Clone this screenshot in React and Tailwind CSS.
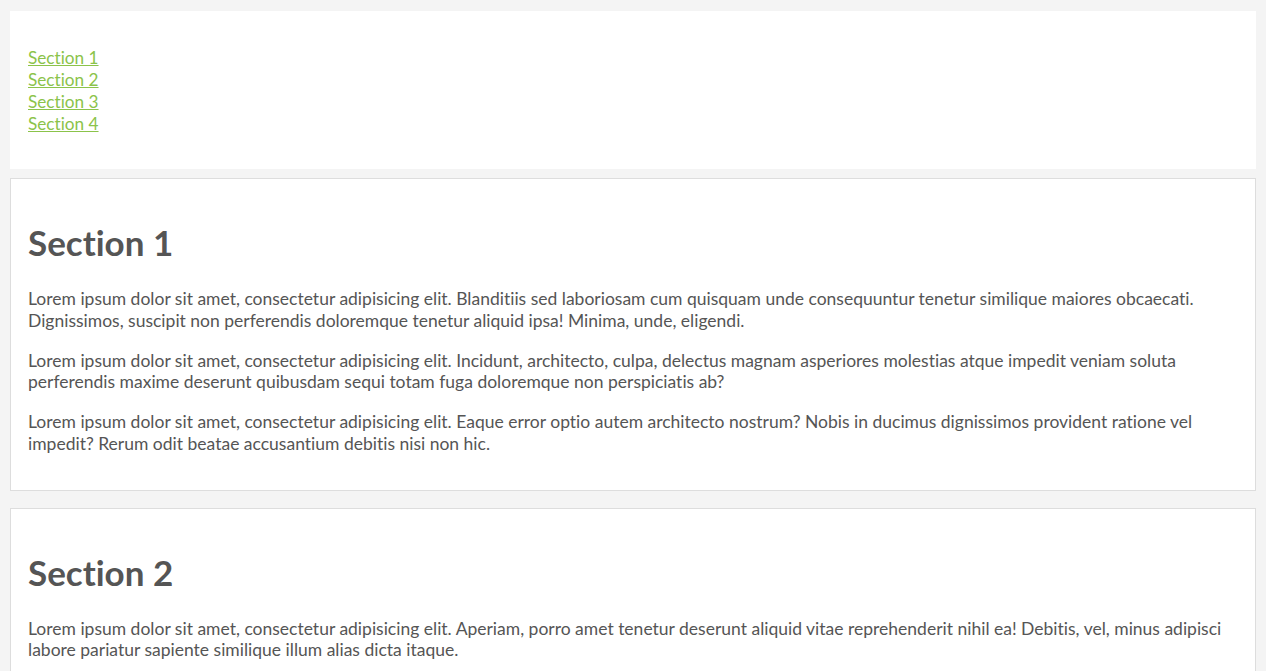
import React from 'react';

const sections = [
  {
    id: 'section-1',
    title: 'Section 1',
    paragraphs: [
      'Lorem ipsum dolor sit amet, consectetur adipisicing elit. Blanditiis sed laboriosam cum quisquam unde consequuntur tenetur similique maiores obcaecati. Dignissimos, suscipit non perferendis doloremque tenetur aliquid ipsa! Minima, unde, eligendi.',
      'Lorem ipsum dolor sit amet, consectetur adipisicing elit. Incidunt, architecto, culpa, delectus magnam asperiores molestias atque impedit veniam soluta perferendis maxime deserunt quibusdam sequi totam fuga doloremque non perspiciatis ab?',
      'Lorem ipsum dolor sit amet, consectetur adipisicing elit. Eaque error optio autem architecto nostrum? Nobis in ducimus dignissimos provident ratione vel impedit? Rerum odit beatae accusantium debitis nisi non hic.',
    ],
  },
  {
    id: 'section-2',
    title: 'Section 2',
    paragraphs: [
      'Lorem ipsum dolor sit amet, consectetur adipisicing elit. Aperiam, porro amet tenetur deserunt aliquid vitae reprehenderit nihil ea! Debitis, vel, minus adipisci labore pariatur sapiente similique illum alias dicta itaque.',
      'Lorem ipsum dolor sit amet, consectetur adipisicing elit. Quas, eligendi, voluptatum tempora facere nobis magni illo quia aperiam dolorum mollitia.',
    ],
  },
  {
    id: 'section-3',
    title: 'Section 3',
    paragraphs: [
      'Lorem ipsum dolor sit amet, consectetur adipisicing elit. Natus, consequuntur, nobis dignissimos recusandae voluptas sapiente cupiditate.',
    ],
  },
  {
    id: 'section-4',
    title: 'Section 4',
    paragraphs: [
      'Lorem ipsum dolor sit amet, consectetur adipisicing elit. Eum, facilis, quaerat ipsam doloribus voluptatem sint.',
    ],
  },
];

export default function App() {
  return (
    <div
      className="min-h-screen bg-[#f4f4f4] px-[10px] py-[11px] text-[#555] [font-variant-ligatures:none]"
      style={{ fontFamily: 'Lato, "Open Sans", sans-serif' }}
    >
      {/* Table of contents */}
      <nav className="bg-white px-[18px] pt-[36px] pb-[34px]">
        <ul>
          {sections.map((s) => (
            <li key={s.id} className="text-[17.2px] leading-[22px]">
              <a href={`#${s.id}`} className="text-[#8bc34a] underline">
                {s.title}
              </a>
            </li>
          ))}
        </ul>
      </nav>

      {sections.map((s, i) => (
        <section
          key={s.id}
          id={s.id}
          className={`border border-[#dddddd] bg-white px-[17px] pt-[43px] pb-[17px] ${i === 0 ? 'mt-[9px]' : 'mt-[17px]'}`}
        >
          <h2 className="mb-[26px] text-[35px] font-bold leading-[40px]">{s.title}</h2>
          {s.paragraphs.map((p, j) => (
            <p key={j} className="mb-[18px] text-[17.5px] leading-[21.75px]">
              {p}
            </p>
          ))}
        </section>
      ))}
    </div>
  );
}
